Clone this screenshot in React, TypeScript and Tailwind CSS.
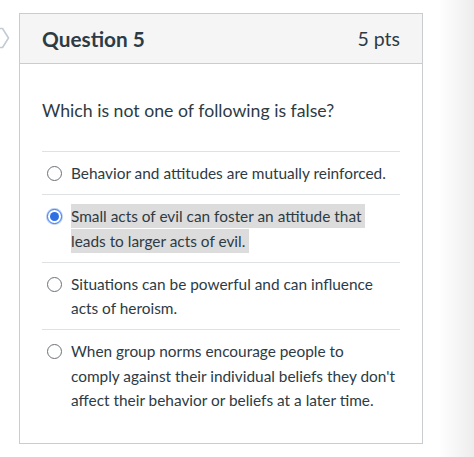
import React from "react";

const OPTIONS = [
  { text: "Behavior and attitudes are mutually reinforced.", selected: false },
  { text: "Small acts of evil can foster an attitude that leads to larger acts of evil.", selected: true },
  { text: "Situations can be powerful and can influence acts of heroism.", selected: false },
  {
    text: "When group norms encourage people to comply against their individual beliefs they don't affect their behavior or beliefs at a later time.",
    selected: false,
  },
];

function Radio({ checked }: { checked: boolean }) {
  if (checked) {
    return (
      <span className="mt-[5px] flex h-[15px] w-[15px] shrink-0 items-center justify-center rounded-full border border-[#3b7ae8] bg-white shadow-[0_0_0_1px_#b9cdf5]">
        <span className="h-[9px] w-[9px] rounded-full bg-[#2f6fe4]" />
      </span>
    );
  }
  return <span className="mt-[5px] h-[15px] w-[15px] shrink-0 rounded-full border border-[#6b7177] bg-white" />;
}

export default function App() {
  return (
    <div
      className="relative h-[457px] w-[474px] overflow-hidden bg-white text-[#2d3b45]"
      style={{ fontFamily: "Lato, 'Open Sans', sans-serif" }}
    >
      {/* page edge shadow */}
      <div className="absolute bottom-0 right-0 top-0 w-[36px] bg-gradient-to-r from-white to-[#ededed]" />

      {/* nav arrow, cut off at the left */}
      <svg className="absolute left-0 top-[27px]" width="10" height="22" viewBox="0 0 10 22">
        <path d="M-6 1.5 H2.5 L8.5 11 L2.5 20.5 H-6" fill="none" stroke="#c3cbd3" strokeWidth="1.6" strokeLinejoin="round" />
      </svg>

      <div className="relative ml-[19px] mt-[13px] w-[404px] border border-[#c7cdd1] bg-white">
        <div className="flex h-[50px] items-center justify-between border-b border-[#c7cdd1] bg-[#f5f5f5] px-[22px]">
          <h2 className="text-[20.8px] font-bold">Question 5</h2>
          <span className="text-[19.5px]">5 pts</span>
        </div>

        <div className="px-[22px] pb-[22px]">
          <p className="pb-[28px] pt-[34px] text-[17.7px] leading-[25px]">Which is not one of following is false?</p>

          <ul>
            {OPTIONS.map((o) => (
              <li key={o.text} className="flex gap-[9px] border-t border-[#dfe2e4] py-[9px] pl-[5px] pr-[5px]">
                <Radio checked={o.selected} />
                <span className="text-[15.4px] leading-[24.3px]">
                  {o.selected ? (
                    <span className="bg-[#dcdcdc] py-[3px] pr-[4px] [box-decoration-break:clone]">{o.text}</span>
                  ) : (
                    o.text
                  )}
                </span>
              </li>
            ))}
          </ul>
        </div>
      </div>
    </div>
  );
}
